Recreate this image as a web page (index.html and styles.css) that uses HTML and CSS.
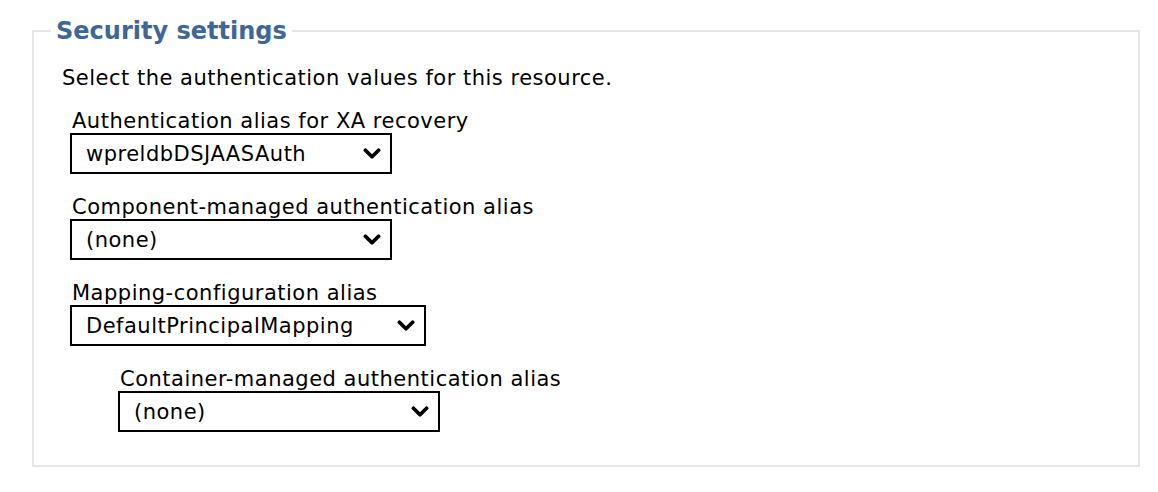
FILE: index.html
```html
<!DOCTYPE html>
<html lang="en">
<head>
<meta charset="UTF-8">
<meta name="viewport" content="width=device-width, initial-scale=1.0">
<title>Security settings</title>
<link rel="stylesheet" href="styles.css">
</head>
<body>
<div class="page">
    <fieldset class="settings">
        <legend>Security settings</legend>
        <p class="intro">Select the authentication values for this resource.</p>

        <div class="field">
            <label for="xaAlias">Authentication alias for XA recovery</label>
            <div class="select-wrap alias">
                <select id="xaAlias">
                    <option>wpreldbDSJAASAuth</option>
                    <option>(none)</option>
                </select>
                <svg class="chevron" viewBox="0 0 16 10"><polyline points="2,2 8,8 14,2"/></svg>
            </div>
        </div>

        <div class="field">
            <label for="componentAlias">Component-managed authentication alias</label>
            <div class="select-wrap alias">
                <select id="componentAlias">
                    <option>(none)</option>
                    <option>wpreldbDSJAASAuth</option>
                </select>
                <svg class="chevron" viewBox="0 0 16 10"><polyline points="2,2 8,8 14,2"/></svg>
            </div>
        </div>

        <div class="field">
            <label for="mappingAlias">Mapping-configuration alias</label>
            <div class="select-wrap mapping">
                <select id="mappingAlias">
                    <option>DefaultPrincipalMapping</option>
                    <option>(none)</option>
                </select>
                <svg class="chevron" viewBox="0 0 16 10"><polyline points="2,2 8,8 14,2"/></svg>
            </div>
        </div>

        <div class="field nested">
            <label for="containerAlias">Container-managed authentication alias</label>
            <div class="select-wrap alias">
                <select id="containerAlias">
                    <option>(none)</option>
                    <option>wpreldbDSJAASAuth</option>
                </select>
                <svg class="chevron" viewBox="0 0 16 10"><polyline points="2,2 8,8 14,2"/></svg>
            </div>
        </div>
    </fieldset>
</div>
</body>
</html>
```

FILE: styles.css
```css
body {
    font-family: "DejaVu Sans", Verdana, sans-serif;
    font-size: 21px;
    letter-spacing: 0.5px;
    color: #000;
    margin: 0;
    padding: 0;
    background-color: #fff;
}
.page {
    padding: 18px 18px 0 32px;
}
.settings {
    margin: 0;
    padding: 0 0 33px 0;
    border: 2px solid #e6e6e6;
    width: 1104px;
}
.settings legend {
    margin-left: 17px;
    padding: 0 5px;
    font-size: 24px;
    font-weight: bold;
    letter-spacing: 0;
    line-height: 26px;
    color: #3e6698;
}
.intro {
    margin: 22px 0 19px 28px;
    line-height: 24px;
}
.field {
    margin-left: 36px;
    margin-bottom: 21px;
}
.field:last-child {
    margin-bottom: 0;
}
.field.nested {
    margin-left: 84px;
}
label {
    display: block;
    padding-left: 2px;
    line-height: 24px;
}
.select-wrap {
    position: relative;
    height: 41px;
}
.select-wrap.alias {
    width: 322px;
}
.select-wrap.mapping {
    width: 356px;
}
select {
    -webkit-appearance: none;
    appearance: none;
    width: 100%;
    height: 100%;
    box-sizing: border-box;
    border: 2px solid #000;
    border-radius: 0;
    background-color: #fff;
    padding: 0 40px 0 14px;
    font-family: inherit;
    font-size: 21px;
    letter-spacing: 0.5px;
    color: #000;
}
.chevron {
    position: absolute;
    right: 11px;
    top: 15px;
    width: 18px;
    height: 11px;
    pointer-events: none;
}
.chevron polyline {
    fill: none;
    stroke: #000;
    stroke-width: 3.4;
    stroke-linecap: round;
    stroke-linejoin: round;
}
```
